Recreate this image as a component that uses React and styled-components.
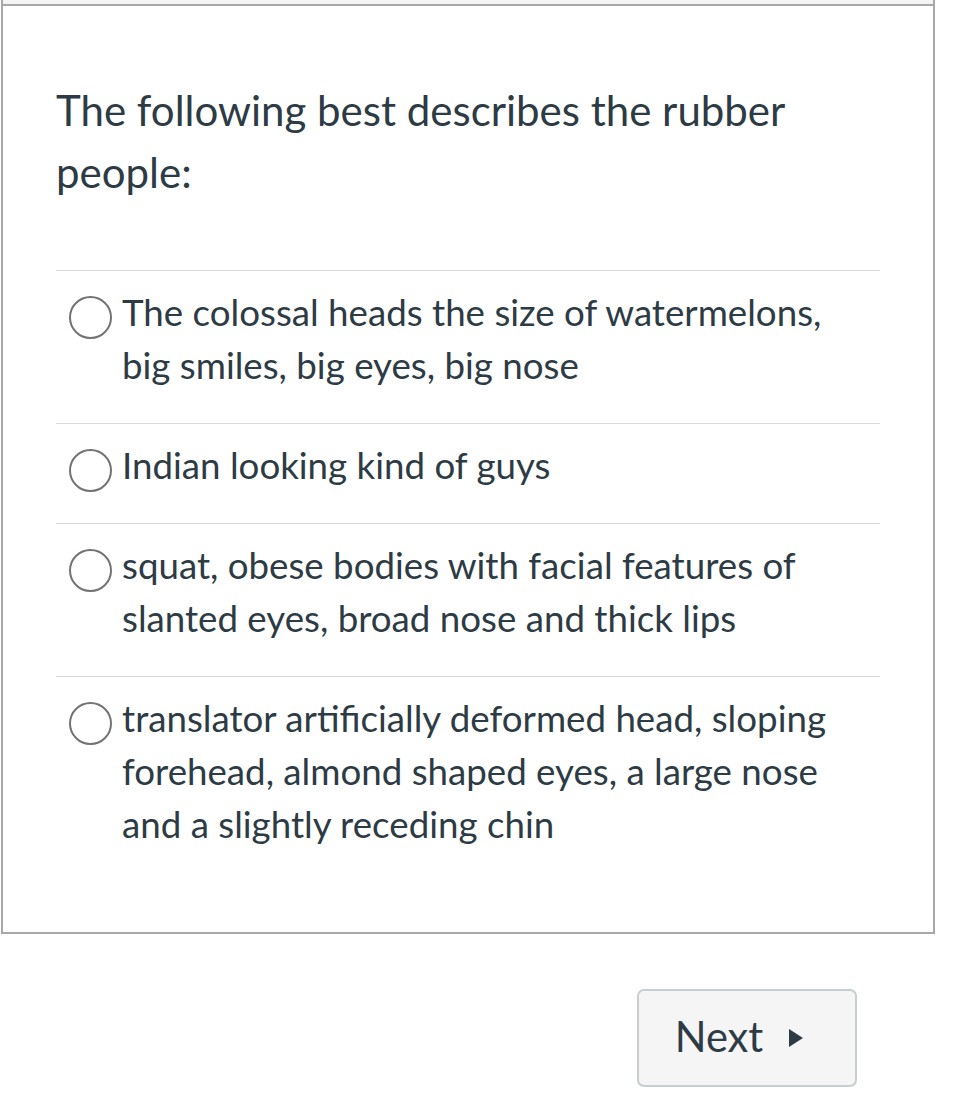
import React from "react";
import styled, { createGlobalStyle } from "styled-components";

const Global = createGlobalStyle`
  html, body { margin: 0; padding: 0; background: #fff; }
  body { font-family: Lato, "Open Sans", sans-serif; color: #2d3b45; }
`;

const Page = styled.div`
  width: 964px;
  min-height: 1118px;
  box-sizing: border-box;
  padding-left: 1px;
`;

const Panel = styled.section`
  width: 934px;
  box-sizing: border-box;
  border: 2px solid #a8a8a8;
  border-top: 0;
`;

const TopStrip = styled.div`
  height: 4px;
  background: #f4f4f4;
  border-bottom: 2px solid #a8a8a8;
`;

const Body = styled.div`
  padding: 73px 53px 50px 53px;
`;

const Question = styled.p`
  margin: 0 0 67px 0;
  font-size: 42px;
  line-height: 62px;
  color: #2d3b45;
`;

const AnswerList = styled.div`
  display: flex;
  flex-direction: column;
  width: 824px;
`;

const Answer = styled.label`
  display: flex;
  align-items: flex-start;
  gap: 10px;
  padding: 15px 18px 31px 13px;
  border-top: 1px solid #d7dadd;
  font-size: 36.7px;
  line-height: 53px;
  color: #2d3b45;
  cursor: pointer;
`;

const Radio = styled.span`
  flex: none;
  width: 43px;
  height: 43px;
  box-sizing: border-box;
  border: 2.5px solid #737373;
  border-radius: 50%;
  margin-top: 10px;
  background: #fff;
`;

const AnswerText = styled.span`
  flex: 1;
`;

const Footer = styled.div`
  display: flex;
  justify-content: flex-end;
  width: 934px;
  box-sizing: border-box;
  padding: 55px 78px 0 0;
`;

const NextButton = styled.button`
  display: flex;
  align-items: center;
  justify-content: center;
  gap: 26px;
  width: 220px;
  height: 98px;
  box-sizing: border-box;
  border: 2px solid #c7cdd1;
  border-radius: 7px;
  background: #f5f5f5;
  color: #2d3b45;
  font-family: Lato, "Open Sans", sans-serif;
  font-size: 41.6px;
  padding: 0 16px 4px 0;
  cursor: pointer;
`;

const Caret = styled.svg`
  width: 14px;
  height: 18px;
  margin-top: 4px;
`;

const answers = [
  "The colossal heads the size of watermelons, big smiles, big eyes, big nose",
  "Indian looking kind of guys",
  "squat, obese bodies with facial features of slanted eyes, broad nose and thick lips",
  "translator artificially deformed head, sloping forehead, almond shaped eyes, a large nose and a slightly receding chin",
];

export default function App() {
  return (
    <Page>
      <Global />
      <Panel>
        <TopStrip />
        <Body>
          <Question>The following best describes the rubber people:</Question>
          <AnswerList>
            {answers.map((a) => (
              <Answer key={a}>
                <Radio />
                <AnswerText>{a}</AnswerText>
              </Answer>
            ))}
          </AnswerList>
        </Body>
      </Panel>
      <Footer>
        <NextButton>
          Next
          <Caret viewBox="0 0 14 18">
            <path d="M0 0 L14 9 L0 18 Z" fill="#2d3b45" />
          </Caret>
        </NextButton>
      </Footer>
    </Page>
  );
}
